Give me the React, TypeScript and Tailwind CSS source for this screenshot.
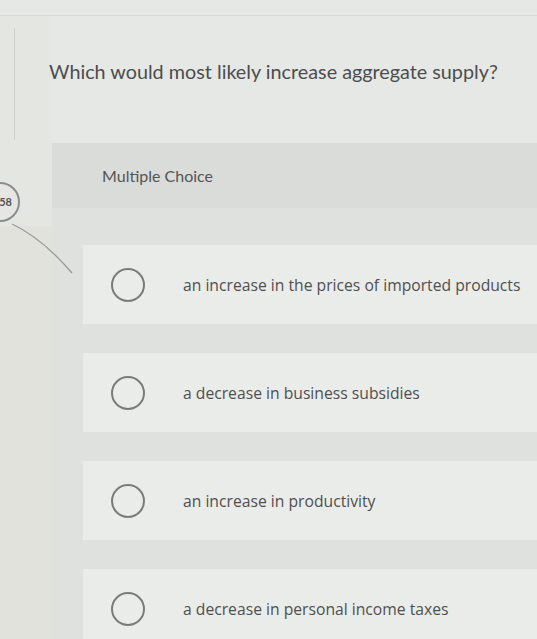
import React from "react";

const options = [
  "an increase in the prices of imported products",
  "a decrease in business subsidies",
  "an increase in productivity",
  "a decrease in personal income taxes",
];

export default function App() {
  return (
    <div className="relative flex h-[639px] w-[537px] flex-col overflow-hidden bg-[#e4e6e2] text-[#4f4f4f]" style={{ fontFamily: "Lato, 'Open Sans', sans-serif" }}>
      <div className="h-[16px] shrink-0 border-b border-[#d6d9d6] bg-[#e6e8e6]" />
      <div className="flex flex-1">
        <div className="flex w-[52px] shrink-0 flex-col bg-[#e4e6e2]">
          <div className="mt-[12px] h-[112px] w-[15px] border-r border-[#cdd0cd]" />
          <div className="mt-[42px] -ml-[20px] flex h-[40px] w-[40px] items-center justify-end rounded-full border-2 border-[#8c8c8c] bg-[#e6e7e3] pr-[6px] text-[11px] font-bold text-[#555]">
            58
          </div>
          <div className="mt-[4px] flex-1 bg-[#e2e2dd]" />
        </div>
        <div className="flex flex-1 flex-col">
          <div className="h-[127px] shrink-0 bg-[#e5e8e5] pt-[43px]">
            <p className="-ml-[3px] text-[19.8px] leading-[24px] text-[#4d4d4d]">
              Which would most likely increase aggregate supply?
            </p>
          </div>
          <div className="flex h-[65px] shrink-0 items-center bg-[#dadcda] pl-[50px]">
            <span className="text-[16px] text-[#555]">Multiple Choice</span>
          </div>
          <div className="flex flex-1 flex-col gap-[29px] bg-[#dfe1de] pl-[31px] pt-[37px]">
            {options.map((o) => (
              <div key={o} className="flex h-[79px] shrink-0 items-center bg-[#eaecea] pl-[28px]">
                <div className="h-[34px] w-[34px] shrink-0 rounded-full border-2 border-[#7b7b7b]" />
                <span className="ml-[38px] mt-[3px] whitespace-nowrap text-[15.7px] text-[#4f4f4f]" style={{ fontFamily: "'Open Sans', Lato, sans-serif" }}>
                  {o}
                </span>
              </div>
            ))}
          </div>
        </div>
      </div>
      <svg className="pointer-events-none absolute left-0 top-0" width="120" height="300" viewBox="0 0 120 300">
        <path d="M12 224 Q42 238 72 273" fill="none" stroke="#9a9a9a" strokeWidth="1.3" />
      </svg>
    </div>
  );
}
